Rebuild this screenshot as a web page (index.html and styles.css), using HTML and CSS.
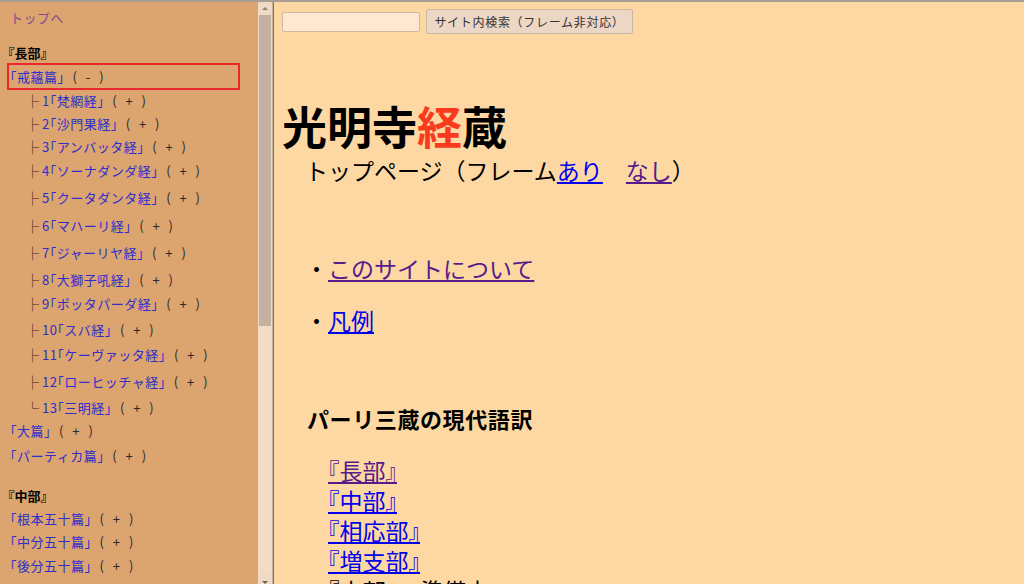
FILE: index.html
```html
<!DOCTYPE html>
<html lang="ja">
<head>
<meta charset="utf-8">
<title>光明寺経蔵</title>
<link rel="stylesheet" href="styles.css">
</head>
<body>
<div class="frames">
  <nav class="side">
    <div class="side-content">
      <div class="row"><a class="s-visited" href="#">トップへ</a></div>
      <div class="row sec mt12">『長部』</div>
      <div class="row current mt1"><a class="s-link" href="#">「戒蘊篇」</a><span class="pm">( - )</span></div>
      <div class="row tree mt1"><span class="br">├</span> <a class="s-link" href="#">1「梵網経」</a><span class="pm">( + )</span></div>
      <div class="row tree"><span class="br">├</span> <a class="s-link" href="#">2「沙門果経」</a><span class="pm">( + )</span></div>
      <div class="row tree"><span class="br">├</span> <a class="s-link" href="#">3「アンバッタ経」</a><span class="pm">( + )</span></div>
      <div class="row tree mt1"><span class="br">├</span> <a class="s-link" href="#">4「ソーナダンダ経」</a><span class="pm">( + )</span></div>
      <div class="row tree mt4"><span class="br">├</span> <a class="s-link" href="#">5「クータダンタ経」</a><span class="pm">( + )</span></div>
      <div class="row tree mt5"><span class="br">├</span> <a class="s-link" href="#">6「マハーリ経」</a><span class="pm">( + )</span></div>
      <div class="row tree mt4"><span class="br">├</span> <a class="s-link" href="#">7「ジャーリヤ経」</a><span class="pm">( + )</span></div>
      <div class="row tree mt4"><span class="br">├</span> <a class="s-link" href="#">8「大獅子吼経」</a><span class="pm">( + )</span></div>
      <div class="row tree mt1"><span class="br">├</span> <a class="s-link" href="#">9「ポッタパーダ経」</a><span class="pm">( + )</span></div>
      <div class="row tree mt3"><span class="br">├</span> <a class="s-link" href="#">10「スバ経」</a><span class="pm">( + )</span></div>
      <div class="row tree mt2"><span class="br">├</span> <a class="s-link" href="#">11「ケーヴァッタ経」</a><span class="pm">( + )</span></div>
      <div class="row tree mt4"><span class="br">├</span> <a class="s-link" href="#">12「ローヒッチャ経」</a><span class="pm">( + )</span></div>
      <div class="row tree mt3"><span class="br">└</span> <a class="s-link" href="#">13「三明経」</a><span class="pm">( + )</span></div>
      <div class="row"><a class="s-link" href="#">「大篇」</a><span class="pm">( + )</span></div>
      <div class="row mt2"><a class="s-link" href="#">「パーティカ篇」</a><span class="pm">( + )</span></div>
      <div class="row sec mt17">『中部』</div>
      <div class="row"><a class="s-link" href="#">「根本五十篇」</a><span class="pm">( + )</span></div>
      <div class="row"><a class="s-link" href="#">「中分五十篇」</a><span class="pm">( + )</span></div>
      <div class="row mt1"><a class="s-link" href="#">「後分五十篇」</a><span class="pm">( + )</span></div>
    </div>
    <div class="scrollbar">
      <div class="sb-btn"><span class="tri-up"></span></div>
      <div class="sb-thumb"></div>
      <div class="sb-track"></div>
      <div class="sb-btn sb-bottom"><span class="tri-down"></span></div>
    </div>
  </nav>
  <div class="divider"></div>
  <main class="main">
    <form class="search">
      <input class="search-input" type="text">
      <button class="search-btn" type="button">サイト内検索（フレーム非対応）</button>
    </form>
    <h1 class="title">光明寺<span class="red">経</span>蔵</h1>
    <p class="sub">トップページ（フレーム<a class="link" href="#">あり</a>　<a class="visited" href="#">なし</a>）</p>
    <p class="item">・<a class="visited" href="#">このサイトについて</a></p>
    <p class="item item2">・<a class="link" href="#">凡例</a></p>
    <h2 class="heading">パーリ三蔵の現代語訳</h2>
    <ul class="books">
      <li><a class="visited" href="#">『長部』</a></li>
      <li><a class="link" href="#">『中部』</a></li>
      <li><a class="link" href="#">『相応部』</a></li>
      <li><a class="link" href="#">『増支部』</a></li>
      <li>『小部』　準備中</li>
    </ul>
  </main>
</div>
</body>
</html>
```

FILE: styles.css
```css
html, body {
  margin: 0;
  height: 100%;
  overflow: hidden;
}

body {
  font-family: "Noto Sans CJK JP", "Noto Sans", sans-serif;
  color: #000;
}

.frames {
  display: flex;
  height: 584px;
  box-sizing: border-box;
  border-top: 2px solid #a89e94;
}

/* ---------- left frame ---------- */
.side {
  display: flex;
  flex: none;
  width: 272px;
  background: #dca46e;
}

.side-content {
  flex: none;
  width: 258px;
  box-sizing: border-box;
  padding: 4px 0 0 10px;
  font-size: 13px;
  line-height: 23px;
  color: #333;
  overflow: hidden;
}

.row {
  white-space: nowrap;
  height: 23px;
}

.mt1 { margin-top: 1px; }
.mt2 { margin-top: 2px; }
.mt3 { margin-top: 3px; }
.mt4 { margin-top: 4px; }
.mt5 { margin-top: 5px; }
.mt12 { margin-top: 12px; }
.mt17 { margin-top: 17px; }

.sec {
  font-weight: bold;
  color: #000;
  margin-left: -2px;
  font-feature-settings: "halt";
}

.current {
  margin: 1px 20px 0 -1px;
  padding-left: 1px;
  outline: 2px solid #e8282c;
}

.tree {
  padding-left: 16px;
}

.br {
  color: #3a1a10;
}

.s-link {
  color: #2e2ecc;
  text-decoration: none;
  letter-spacing: 0.5px;
  font-feature-settings: "halt";
}

.s-visited {
  color: #844a8c;
  text-decoration: none;
  letter-spacing: 0.5px;
}

.pm {
  margin-left: 8px;
  letter-spacing: 3px;
  color: #2a2a2a;
}

/* fake scrollbar */
.scrollbar {
  flex: none;
  width: 14px;
  display: flex;
  flex-direction: column;
  background: #f2dcc6;
}

.sb-btn {
  flex: none;
  height: 13px;
  display: flex;
  align-items: center;
  justify-content: center;
  background: #f0dac6;
}

.sb-bottom {
  height: 12px;
  align-items: flex-end;
}

.tri-up {
  width: 0;
  height: 0;
  border-left: 3px solid transparent;
  border-right: 3px solid transparent;
  border-bottom: 3px solid #8c8078;
}

.tri-down {
  width: 0;
  height: 0;
  border-left: 3px solid transparent;
  border-right: 3px solid transparent;
  border-top: 3px solid #6c6058;
}

.sb-thumb {
  flex: none;
  height: 311px;
  margin: 0 1px;
  background: #c2b1a0;
}

.sb-track {
  flex: 1;
}

.divider {
  flex: none;
  width: 1px;
  background: #c4b4a4;
  border-right: 1px solid #7e7268;
}

/* ---------- right frame ---------- */
.main {
  flex: 1;
  background: #fed8a2;
  padding: 7px 8px 0 8px;
  overflow: hidden;
}

.search {
  display: flex;
  align-items: center;
  margin: 0;
  height: 25px;
}

.search-input {
  width: 138px;
  height: 20px;
  box-sizing: border-box;
  margin: 0 6px 0 0;
  padding: 0 3px;
  border: 1px solid #d2b8a0;
  border-radius: 2px;
  background: #ffe8d2;
}

.search-btn {
  height: 25px;
  width: 207px;
  box-sizing: border-box;
  margin: 0;
  padding: 0;
  font-family: "Noto Sans CJK JP", sans-serif;
  font-size: 12px;
  letter-spacing: 0.7px;
  color: #333;
  background: #ecd6c4;
  border: 1px solid #cdb6a2;
  border-radius: 2px;
  white-space: nowrap;
}

.title {
  margin: 65px 0 0;
  font-size: 45px;
  line-height: 54px;
  font-weight: bold;
}

.red {
  color: #fa3a1c;
}

.sub {
  margin: 2px 0 0;
  padding-left: 23px;
  font-size: 23px;
  line-height: 30px;
}

.item {
  margin: 68px 0 0;
  padding-left: 23px;
  font-size: 23px;
  line-height: 30px;
}

.item2 {
  margin-top: 22px;
}

.heading {
  margin: 68px 0 0;
  padding-left: 25px;
  font-size: 22px;
  letter-spacing: 0.6px;
  line-height: 30px;
  font-weight: bold;
}

.books {
  list-style: none;
  margin: 22px 0 0;
  padding-left: 46px;
  font-size: 23px;
  line-height: 30px;
  font-feature-settings: "halt";
}

.link {
  color: #0000ee;
}

.visited {
  color: #551a8b;
}
```
